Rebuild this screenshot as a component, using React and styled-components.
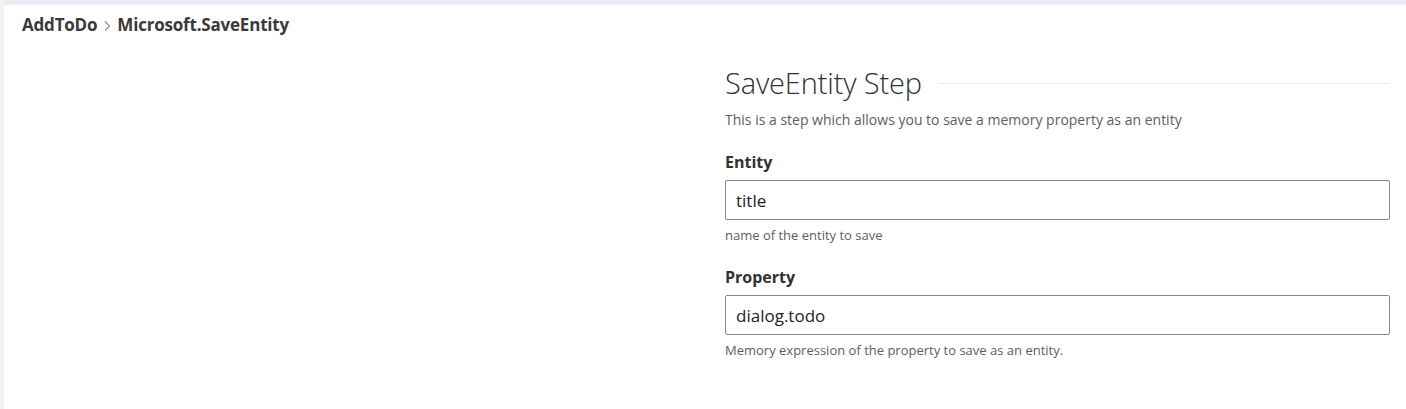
import React from 'react';
import styled, { createGlobalStyle } from 'styled-components';

const GlobalStyle = createGlobalStyle`
  html, body {
    margin: 0;
    padding: 0;
    background: #ffffff;
  }
  body {
    font-family: "Open Sans", "Noto Sans", sans-serif;
    color: #323130;
  }
`;

const Shell = styled.div`
  display: flex;
  width: 1406px;
  height: 409px;
  overflow: hidden;
`;

const SideRail = styled.div`
  width: 4px;
  flex: none;
  background: #f3f2f1;
`;

const Main = styled.div`
  flex: 1;
  display: flex;
  flex-direction: column;
`;

const TopStrip = styled.div`
  height: 5px;
  background: #efe9f5;
`;

const Body = styled.div`
  flex: 1;
  display: grid;
  grid-template-columns: 721px 1fr;
`;

const CanvasPane = styled.div`
  padding: 8px 0 0 18px;
`;

const Breadcrumb = styled.div`
  display: flex;
  align-items: center;
  gap: 6px;
  font-size: 17px;
  font-weight: 700;
  color: #3b3a39;
  letter-spacing: -0.2px;
`;

const Chevron = styled.svg`
  width: 8px;
  height: 12px;
  margin-top: 2px;
  flex: none;
`;

const FormPane = styled.div`
  padding: 58px 16px 0 0;
`;

const TitleRow = styled.div`
  display: flex;
  align-items: center;
  gap: 16px;
`;

const Title = styled.h1`
  margin: 0;
  font-size: 29px;
  font-weight: 300;
  color: #323130;
  line-height: 40px;
  white-space: nowrap;
  letter-spacing: -0.15px;
`;

const Rule = styled.div`
  flex: 1;
  height: 1px;
  margin-top: 0;
  background: #edebe9;
`;

const Description = styled.p`
  margin: 7px 0 0;
  font-size: 14px;
  color: #605e5c;
  line-height: 20px;
`;

const Field = styled.div`
  margin-top: ${({ $first }) => ($first ? '21px' : '23px')};
`;

const Label = styled.label`
  display: block;
  font-size: 16px;
  font-weight: 700;
  color: #323130;
  line-height: 22px;
  margin-bottom: 7px;
`;

const Input = styled.input`
  box-sizing: border-box;
  display: block;
  width: 100%;
  height: 40px;
  padding: 0 10px;
  border: 1px solid #8a8886;
  border-radius: 2px;
  font-family: inherit;
  font-size: 17px;
  color: #201f1e;
  background: #fff;
  outline: none;
`;

const Help = styled.div`
  margin-top: 7px;
  font-size: 13px;
  color: #605e5c;
  line-height: 16px;
`;

const fields = [
  { label: 'Entity', value: 'title', help: 'name of the entity to save' },
  { label: 'Property', value: 'dialog.todo', help: 'Memory expression of the property to save as an entity.' },
];

export default function App() {
  return (
    <>
      <GlobalStyle />
      <Shell>
        <SideRail />
        <Main>
          <TopStrip />
          <Body>
            <CanvasPane>
              <Breadcrumb>
                <span>AddToDo</span>
                <Chevron viewBox="0 0 8 12">
                  <path d="M2 1.5 L6.5 6 L2 10.5" fill="none" stroke="#8a8886" strokeWidth="1.1" />
                </Chevron>
                <span>Microsoft.SaveEntity</span>
              </Breadcrumb>
            </CanvasPane>
            <FormPane>
              <TitleRow>
                <Title>SaveEntity Step</Title>
                <Rule />
              </TitleRow>
              <Description>This is a step which allows you to save a memory property as an entity</Description>
              {fields.map((f, i) => (
                <Field key={f.label} $first={i === 0}>
                  <Label>{f.label}</Label>
                  <Input defaultValue={f.value} readOnly />
                  <Help>{f.help}</Help>
                </Field>
              ))}
            </FormPane>
          </Body>
        </Main>
      </Shell>
    </>
  );
}
